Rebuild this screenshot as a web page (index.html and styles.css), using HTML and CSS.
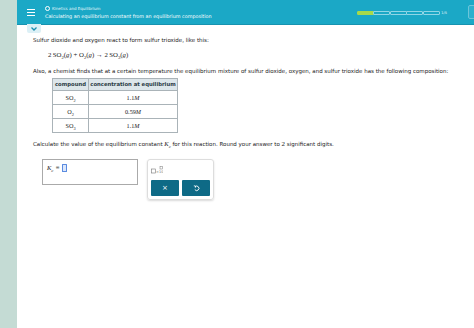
FILE: index.html
```html
<!DOCTYPE html>
<html lang="en">
<head>
    <meta charset="UTF-8">
    <title>Calculating an equilibrium constant</title>
    <link rel="stylesheet" href="styles.css">
</head>
<body>
    <div class="page">
        <aside class="side"></aside>
        <main class="main">
            <header class="topbar">
                <div class="menu">
                    <span></span><span></span><span></span>
                </div>
                <div class="titles">
                    <div class="topic"><span class="ring"></span>Kinetics and Equilibrium</div>
                    <div class="title">Calculating an equilibrium constant from an equilibrium composition</div>
                </div>
                <div class="progress">
                    <span class="seg done"></span><span class="seg"></span><span class="seg"></span><span class="seg"></span><span class="seg"></span>
                    <span class="count">1/5</span>
                </div>
                <div class="corner"></div>
            </header>
            <div class="tab">
                <svg width="8" height="6" viewBox="0 0 8 6"><path d="M1.5 1.5 L4 4 L6.5 1.5" fill="none" stroke="#1a8fb0" stroke-width="1.3"/></svg>
            </div>
            <section class="content">
                <p class="intro">Sulfur dioxide and oxygen react to form sulfur trioxide, like this:</p>
                <p class="eq">2&thinsp;SO<sub>2</sub>(<i>g</i>) + O<sub>2</sub>(<i>g</i>) &rarr; 2&thinsp;SO<sub>3</sub>(<i>g</i>)</p>
                <p class="also">Also, a chemist finds that at a certain temperature the equilibrium mixture of sulfur dioxide, oxygen, and sulfur trioxide has the following composition:</p>
                <table class="comp">
                    <tr><th class="c1">compound</th><th class="c2">concentration at equilibrium</th></tr>
                    <tr><td>SO<sub>2</sub></td><td>1.1<i>M</i></td></tr>
                    <tr><td>O<sub>2</sub></td><td>0.59<i>M</i></td></tr>
                    <tr><td>SO<sub>3</sub></td><td>1.1<i>M</i></td></tr>
                </table>
                <p class="ask">Calculate the value of the equilibrium constant <i class="k">K<sub>c</sub></i> for this reaction. Round your answer to <span class="num">2</span> significant digits.</p>
                <div class="answer">
                    <div class="field">
                        <i class="k">K<sub>c</sub></i> = <span class="slot"></span>
                    </div>
                    <div class="tools">
                        <div class="expo">
                            <svg width="12" height="8" viewBox="0 0 12 8"><rect x="0.5" y="3" width="4" height="4" fill="none" stroke="#777" stroke-width="0.6"/><text x="5" y="7" font-size="3.5" fill="#777" font-family="DejaVu Sans">×10</text><rect x="9" y="0.5" width="2.5" height="2.5" fill="none" stroke="#777" stroke-width="0.5"/></svg>
                        </div>
                        <div class="btns">
                            <button class="btn">&times;</button>
                            <button class="btn">
                                <svg width="7" height="7" viewBox="0 0 10 10"><path d="M3 2.5 A3.2 3.2 0 1 1 2.6 6.5" fill="none" stroke="#fff" stroke-width="1.3"/><path d="M1.2 1.2 L3.6 1.4 L3.4 3.8" fill="none" stroke="#fff" stroke-width="1.2"/></svg>
                            </button>
                        </div>
                    </div>
                </div>
            </section>
        </main>
    </div>
</body>
</html>
```

FILE: styles.css
```css
body { margin: 0; font-family: "DejaVu Sans", Verdana, sans-serif; background: #fff; color: #222; }
.page { display: flex; width: 474px; height: 328px; overflow: hidden; }
.side { width: 17px; flex: none; background: #c4dbd4; }
.main { flex: 1; position: relative; }

.topbar { height: 24px; background: #1ba8c6; display: flex; align-items: center; color: #fff; border-bottom: 1px solid #1793b0; }
.menu { width: 8px; margin: 0 10px 0 10px; display: flex; flex-direction: column; gap: 2px; }
.menu span { height: 1px; background: #fff; }
.titles { flex: 1; display: flex; flex-direction: column; gap: 2px; padding-top: 1px; }
.topic { font-size: 4px; display: flex; align-items: center; gap: 2px; color: #e8f7fb; }
.ring { width: 3px; height: 3px; border: 0.8px solid #fff; border-radius: 50%; }
.title { font-size: 4.85px; }
.progress { display: flex; align-items: center; margin-right: 21px; margin-top: 2px; }
.seg { width: 15px; height: 2px; border: 0.5px solid #8fd6e6; border-radius: 1px; margin-right: -0.5px; }
.seg.done { background: #a7d94a; border-color: #a7d94a; }
.count { font-size: 3.5px; margin-left: 2px; color: #e8f7fb; }
.corner { width: 8px; height: 12px; border: 0.6px solid #6cc5da; border-radius: 2px; margin-right: -4px; background: #2bb0cd; }

.tab { position: absolute; left: 10px; top: 24px; width: 14px; height: 9px; background: #dcf0f6; border-radius: 0 0 2px 2px; display: flex; justify-content: center; align-items: center; }

.content { padding: 12px 16px 0 16px; font-size: 5.5px; line-height: 7px; }
.content p { margin: 0; }
.content p.intro { margin-bottom: 7px; }
.content p.eq { margin: 0 0 10px 15px; font-family: "Liberation Serif", serif; font-size: 6.8px; }
.content p.also { margin-bottom: 3px; }
.content sub { font-size: 70%; line-height: 0; }
.comp { border-collapse: collapse; margin: 0 0 7px 19px; width: 126px; }
.comp th { background: #dde6ea; font-weight: bold; font-size: 5.3px; height: 11px; padding: 0 1px; border: 0.6px solid #aab3b8; color: #2a3a44; }
.comp th.c1 { width: 33px; }
.comp td { border: 0.6px solid #aab3b8; height: 13px; padding: 0; text-align: center; font-family: "Liberation Serif", serif; font-size: 6.2px; }
.k { font-family: "Liberation Serif", serif; font-size: 6.5px; }
.num { font-family: "Liberation Serif", serif; font-size: 7px; }

.answer { display: flex; gap: 9px; margin-left: 9px; margin-top: 11px; }
.field { width: 96px; height: 26px; border: 0.6px solid #aaa; box-sizing: border-box; padding: 4px 4px; font-size: 5px; display: flex; align-items: flex-start; gap: 2px; }
.slot { display: inline-block; width: 3px; height: 6px; border: 0.6px solid #5a8be0; background: #dce7fb; border-radius: 0.5px; }
.tools { width: 67px; height: 41px; box-sizing: border-box; border: 0.5px solid #ddd; border-radius: 3px; box-shadow: 0 1px 2px rgba(0,0,0,0.15); padding: 6px 3px 3px 3px; display: flex; flex-direction: column; justify-content: space-between; }
.expo { height: 8px; }
.btns { display: flex; gap: 3px; }
.btn { flex: 1; height: 16px; border: none; border-radius: 1px; background: #0e6a86; color: #fff; font-size: 7px; padding: 0; display: flex; align-items: center; justify-content: center; font-family: "DejaVu Sans", sans-serif; }
```
